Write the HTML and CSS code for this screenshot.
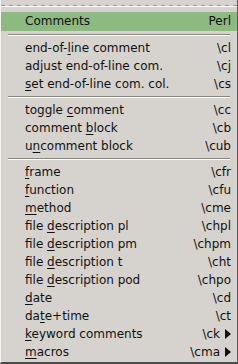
FILE: index.html
```html
<!DOCTYPE html>
<html lang="en">
<head>
  <meta charset="UTF-8">
  <title>Comments menu</title>
  <link rel="stylesheet" href="styles.css">
</head>
<body>
  <div class="menu">
    <div class="tearoff"></div>
    <div class="title"><span>Comments</span><span>Perl</span></div>
    <div class="sep"></div>

    <div class="item"><span>end-of-<u>l</u>ine comment</span><span class="accel">\cl</span></div>
    <div class="item"><span>adjust end-of-line com.</span><span class="accel">\cj</span></div>
    <div class="item"><span><u>s</u>et end-of-line com. col.</span><span class="accel">\cs</span></div>
    <div class="sep"></div>

    <div class="item"><span>toggle <u>c</u>omment</span><span class="accel">\cc</span></div>
    <div class="item"><span>comment <u>b</u>lock</span><span class="accel">\cb</span></div>
    <div class="item"><span>u<u>n</u>comment block</span><span class="accel">\cub</span></div>
    <div class="sep"></div>

    <div class="item"><span><u>f</u>rame</span><span class="accel">\cfr</span></div>
    <div class="item"><span><u>f</u>unction</span><span class="accel">\cfu</span></div>
    <div class="item"><span><u>m</u>ethod</span><span class="accel">\cme</span></div>
    <div class="item"><span>file <u>d</u>escription pl</span><span class="accel">\chpl</span></div>
    <div class="item"><span>file <u>d</u>escription pm</span><span class="accel">\chpm</span></div>
    <div class="item"><span>file <u>d</u>escription t</span><span class="accel">\cht</span></div>
    <div class="item"><span>file <u>d</u>escription pod</span><span class="accel">\chpo</span></div>
    <div class="item"><span><u>d</u>ate</span><span class="accel">\cd</span></div>
    <div class="item"><span>da<u>t</u>e+time</span><span class="accel">\ct</span></div>
    <div class="item sub"><span><u>k</u>eyword comments</span><span class="accel">\ck</span></div>
    <div class="item sub"><span><u>m</u>acros</span><span class="accel">\cma</span></div>
  </div>
</body>
</html>
```

FILE: styles.css
```css
* { box-sizing: border-box; margin: 0; padding: 0; }
body {
  background: #d6d3ce;
  font-family: "DejaVu Sans", sans-serif;
  font-size: 12px;
  color: #111;
}
.menu {
  width: 238px;
  height: 364px;
  background: #d6d3ce;
  border-left: 1px solid #f4f3f1;
  border-right: 1px solid #5c5c5c;
  border-bottom: 2px solid #4a4a4a;
}
.tearoff {
  height: 12px;
  padding-top: 5px;
}
.tearoff::before {
  content: "";
  display: block;
  height: 1px;
  background: repeating-linear-gradient(90deg, #9a9893 0 4px, transparent 4px 8px);
  box-shadow: 0 1px 0 #fff;
}
.title {
  display: flex;
  justify-content: space-between;
  height: 19px;
  line-height: 19px;
  padding: 0 6px 0 24px;
  background: #8cba80;
}
.sep {
  height: 8px;
  padding: 3px 7px 0 7px;
}
.sep::before {
  content: "";
  display: block;
  height: 1px;
  background: #88867f;
  box-shadow: 0 1px 0 #fff;
}
.item {
  display: flex;
  justify-content: space-between;
  align-items: center;
  height: 18px;
  padding: 0 6px 0 24px;
}
.item u {
  text-decoration-thickness: 1px;
  text-underline-offset: 2px;
}
.sub .accel::after {
  content: "";
  display: inline-block;
  margin-left: 5px;
  border-left: 6px solid #111;
  border-top: 5px solid transparent;
  border-bottom: 5px solid transparent;
  vertical-align: -1px;
}
```
